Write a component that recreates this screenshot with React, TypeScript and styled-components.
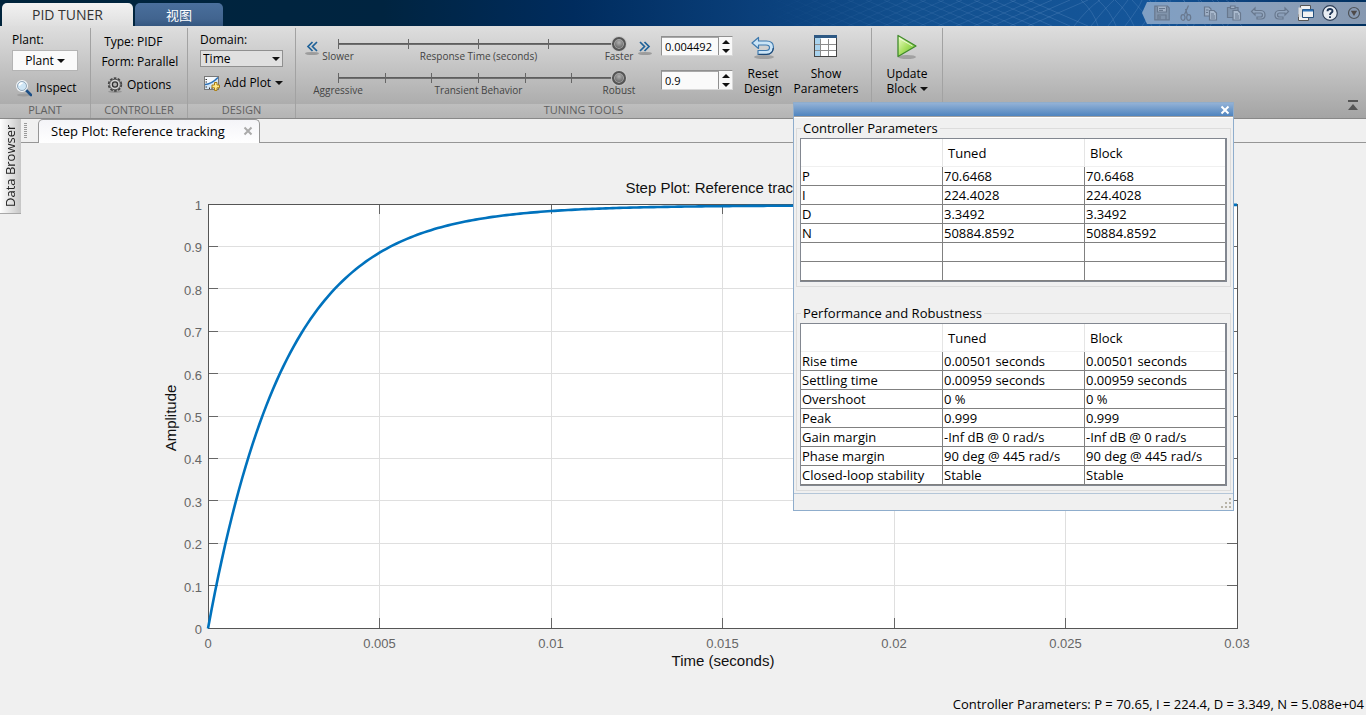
import React from "react";
import styled, { createGlobalStyle } from "styled-components";

const UI_FONT = `"Open Sans", "Noto Sans", "Noto Sans CJK SC", sans-serif`;

const GlobalStyle = createGlobalStyle`
  *, *::before, *::after { box-sizing: border-box; }
  html, body, #root { height: 100%; }
  body { margin: 0; background: #f0f0f0; font: 12px/16px ${UI_FONT}; color: #000; }
  button, input, select { font: inherit; color: inherit; }
`;

const Page = styled.div`
  position: relative;
  display: flex;
  flex-direction: column;
  min-height: 100%;
  overflow-x: hidden;
`;

/* ---------- title bar ---------- */

const TitleBar = styled.header`
  position: relative;
  display: flex;
  align-items: flex-end;
  gap: 2px;
  height: 26px;
  padding-left: 2px;
  background: linear-gradient(90deg, #00243c 0%, #002440 28%, #002c5e 42%, #0a3f7a 55%, #12508f 67%, #15569a 84%, #0a3c74 93%, #00305f 100%);
`;

const Mesh = styled.svg`
  position: absolute;
  top: 0;
  right: 120px;
  width: 540px;
  height: 26px;
`;

const RibbonTab = styled.button<{ $active?: boolean; $width: number }>`
  position: relative;
  width: ${(p) => p.$width}px;
  height: 23px;
  padding: 0;
  border: 0;
  border-radius: 5px 5px 0 0;
  font-size: ${(p) => (p.$active ? 14 : 13)}px;
  color: ${(p) => (p.$active ? "#333" : "#fff")};
  background: ${(p) =>
    p.$active ? "linear-gradient(#f2f2f2, #dfdfdf)" : "linear-gradient(#4a6f9c, #41648f 70%, #34567f)"};
`;

const QuickBar = styled.div`
  position: relative;
  display: flex;
  align-self: center;
  margin-left: auto;
  height: 22px;
  padding-left: 8px;
  background: linear-gradient(90deg, #7f9fc4, #8b9fb9 60%, #8698b0);
  clip-path: polygon(5px 0, 100% 0, 100% 100%, 5px 100%, 0 50%);
`;

const QuickButton = styled.button`
  display: grid;
  place-items: center;
  width: 24px;
  height: 22px;
  padding: 0;
  border: 0;
  background: none;
`;

/* ---------- ribbon ---------- */

const Ribbon = styled.section`
  display: flex;
  height: 93px;
  border-bottom: 1px solid #888;
  background: linear-gradient(#dedede, #a4a4a4);
`;

const Section = styled.div<{ $width: number }>`
  display: flex;
  flex: none;
  flex-direction: column;
  width: ${(p) => p.$width}px;
  border-right: 1px solid;
  border-image: linear-gradient(#dcdcdc 0 3px, #a2a2a2 3px) 1;
`;

const SectionBody = styled.div`
  flex: 1;
  padding: 6px 0 0 12px;
`;

const ToolsBody = styled.div<{ $center?: boolean }>`
  display: flex;
  flex: 1;
  justify-content: ${(p) => (p.$center ? "center" : "flex-start")};
  padding-left: ${(p) => (p.$center ? 0 : 9)}px;
`;

const SectionName = styled.div`
  height: 14px;
  font-size: 11px;
  line-height: 12px;
  text-align: center;
  color: #606060;
  background: linear-gradient(#bebebe, #b4b4b4);
`;

const Line = styled.div`
  font-size: 12px;
  line-height: 16px;
`;

const PlantButton = styled.button`
  display: flex;
  align-items: center;
  justify-content: center;
  gap: 3px;
  width: 66px;
  height: 21px;
  margin-top: 2px;
  padding: 0;
  border: 1px solid #b4b4b4;
  background: #fafafa;
`;

const IconTextButton = styled.button<{ $top: number }>`
  display: flex;
  align-items: center;
  gap: 4px;
  height: 20px;
  margin: ${(p) => p.$top}px 0 0 4px;
  padding: 0;
  border: 0;
  background: none;
  white-space: nowrap;
`;

const TypeList = styled.dl`
  display: grid;
  grid-template-columns: 34px auto;
  column-gap: 3px;
  margin: 0 0 0 -3px;
  line-height: 20px;
  dt { text-align: right; }
  dd { margin: 0; }
`;

const SelectBox = styled.div`
  display: grid;
  align-items: center;
  width: 83px;
  height: 17px;
  margin-top: 2px;
  > * { grid-area: 1 / 1; }
  > svg { justify-self: end; margin-right: 3px; pointer-events: none; }
`;

const DomainSelect = styled.select`
  width: 83px;
  height: 17px;
  padding: 0 2px;
  border: 1px solid #909090;
  border-radius: 0;
  background: #e0e0e0;
  line-height: 14px;
  appearance: none;
`;

const ChevronButton = styled.button`
  width: 14px;
  height: 20px;
  margin-top: 12px;
  padding: 0;
  border: 0;
  background: none;
  svg { display: block; }
`;

const SliderColumn = styled.div`
  display: flex;
  flex-direction: column;
  gap: 7px;
  width: 281px;
  margin: 0 19px;
  padding-top: 10px;
`;

const SliderStack = styled.div`
  display: grid;
  height: 15px;
  > * { grid-area: 1 / 1; }
`;

const Ticks = styled.div`
  display: flex;
  align-items: center;
  justify-content: space-between;
  height: 15px;
  background: linear-gradient(#555, #777) center / 100% 2px no-repeat;
  i { width: 1px; height: 10px; background: #666; }
`;

const Range = styled.input`
  height: 15px;
  margin: 0 -7px;
  background: none;
  appearance: none;
  &::-webkit-slider-thumb {
    appearance: none;
    width: 14px;
    height: 14px;
    border: 2px solid #555;
    border-radius: 50%;
    background: radial-gradient(circle at 50% 35%, #b0b0b0, #666 70%);
    box-shadow: inset 0 0 0 1px #aaa, 0 0 0 1px #c8c8c8;
  }
`;

const SliderLabels = styled.div`
  display: grid;
  grid-template-columns: 60px 1fr 60px;
  margin: 0 -30px;
  font-size: 10px;
  line-height: 11px;
  text-align: center;
  color: #444;
`;

const SliderBlock = styled.div`
  height: 27px;
`;

const SpinColumn = styled.div`
  display: flex;
  flex-direction: column;
  gap: 14px;
  width: 72px;
  margin-left: 9px;
  padding-top: 10px;
`;

const SpinBox = styled.div`
  display: flex;
  height: 20px;
  border: 1px solid #d8d8d8;
  border-top-color: #909090;
  border-left-color: #909090;
  background: #f8f8f8;
`;

const SpinInput = styled.input`
  width: 57px;
  padding: 0 0 0 3px;
  border: 0;
  border-top: 1px solid #a8a8a8;
  border-right: 1px solid #909090;
  background: #fafafa;
  font-size: 11px;
`;

const SpinButtons = styled.div`
  display: flex;
  flex: 1;
  flex-direction: column;
  button {
    display: grid;
    flex: 1;
    place-items: center;
    padding: 0;
    border: 0;
    background: none;
  }
`;

const BigButton = styled.button<{ $width: number }>`
  display: flex;
  flex-direction: column;
  align-items: center;
  gap: 6px;
  width: ${(p) => p.$width}px;
  height: 78px;
  padding: 8px 0 0;
  border: 0;
  background: none;
  line-height: 15px;
  svg { flex: none; }
  span svg { margin-left: 3px; vertical-align: 2px; }
`;

const CollapseButton = styled.button`
  align-self: flex-end;
  margin: 0 8px 7px auto;
  padding: 0;
  border: 0;
  background: none;
  svg { display: block; }
`;

/* ---------- document ---------- */

const Workspace = styled.div`
  display: flex;
  flex: 1;
`;

const Rail = styled.nav`
  width: 21px;
`;

const RailButton = styled.button`
  width: 21px;
  height: 95px;
  padding: 0;
  border: 0;
  border-top: 1px solid #a8a8a8;
  background: linear-gradient(270deg, #fff, #c6c6c6);
  writing-mode: vertical-rl;
  transform: rotate(180deg);
  font-size: 13px;
  line-height: 21px;
  color: #222;
`;

const Document = styled.main`
  display: flex;
  flex: 1;
  flex-direction: column;
  min-width: 0;
`;

const TabStrip = styled.div`
  display: flex;
  height: 24px;
  &::after { content: ""; flex: 1; border-bottom: 1px solid #969696; }
`;

const Grip = styled.div`
  width: 17px;
  padding: 4px 0 0 3px;
  border-bottom: 1px solid #969696;
  &::before {
    content: "";
    display: block;
    width: 3px;
    height: 16px;
    background: repeating-linear-gradient(#999 0 1px, transparent 1px 2px);
  }
`;

const DocTab = styled.div`
  display: flex;
  align-items: center;
  justify-content: space-between;
  width: 222px;
  padding: 0 6px 2px 12px;
  border: 1px solid #969696;
  border-width: 1px 1px 0;
  border-radius: 5px 5px 0 0;
  background: linear-gradient(#f4f4f8, #fff);
  font-size: 13px;
  white-space: nowrap;
  button { display: grid; padding: 0; border: 0; background: none; }
`;

const Plot = styled.svg`
  display: block;
  width: 100%;
  height: auto;
  font-family: "Liberation Sans", Arial, sans-serif;
`;

const StatusBar = styled.footer`
  margin-top: auto;
  padding: 0 2px 3px;
  text-align: right;
  font-size: 13px;
  line-height: 16px;
`;

/* ---------- floating parameters window ---------- */

const FloatWindow = styled.aside`
  position: absolute;
  top: 102px;
  right: 132px;
  width: 441px;
  border: 1px solid #8fadcc;
  background: #f0f0f0;
  font-size: 13px;
`;

const FloatTitle = styled.div`
  display: flex;
  align-items: center;
  justify-content: flex-end;
  height: 14px;
  padding-right: 3px;
  border-bottom: 1px solid #a0a0a0;
  background: linear-gradient(#93b2d6, #4f84bf);
  button { display: grid; padding: 0; border: 0; background: none; }
`;

const FloatBody = styled.div`
  display: flex;
  flex-direction: column;
  gap: 18px;
  padding: 2px;
  border-top: 1px solid #fff;
  border-bottom: 1px solid #b4c6d8;
`;

const Group = styled.fieldset`
  min-width: 0;
  margin: 0;
  padding: 2px 3px 4px;
  border: 1px solid #dcdcdc;
  legend { margin-left: 1px; padding: 0 2px; line-height: 16px; }
`;

const DataTable = styled.table`
  width: 100%;
  border: 1px solid #828790;
  border-right-width: 2px;
  border-spacing: 0;
  table-layout: fixed;
  background: #fff;
  line-height: 17px;
  white-space: nowrap;
  th, td { height: 19px; padding: 0 1px; text-align: left; font-weight: 400; }
  thead th { width: 142px; height: 28px; padding: 2px 5px 0; border-right: 1px solid #e5e5e5; border-bottom: 1px solid #f0f0f0; }
  thead th:last-child { width: auto; }
  tbody th, tbody td { border-right: 1px solid #808080; border-bottom: 1px solid #808080; }
  tr > :last-child { border-right-width: 0; }
`;

const FloatFoot = styled.div`
  display: flex;
  align-items: flex-end;
  justify-content: flex-end;
  height: 16px;
  padding: 0 1px 1px 0;
`;

/* ---------- icons ---------- */

const Caret = ({ up = false }: { up?: boolean }) => (
  <svg width="8" height="4" viewBox="0 0 8 4" aria-hidden="true">
    <path d={up ? "M0 4L4 0L8 4Z" : "M0 0H8L4 4Z"} fill="#111" />
  </svg>
);

const MagnifierIcon = () => (
  <svg width="16" height="17" viewBox="0 0 16 17" aria-hidden="true">
    <ellipse cx="8" cy="15" rx="7" ry="1.5" fill="#888" opacity=".5" />
    <path d="M9.5 9.5L15 15" stroke="#1c4f86" strokeWidth="2.6" strokeLinecap="round" />
    <circle cx="6" cy="6" r="5.2" fill="#d9edf9" stroke="#f2f6f9" strokeWidth="1.6" />
    <circle cx="6" cy="6" r="4.5" fill="#cfe6f5" stroke="#8295a8" strokeWidth=".8" />
    <path d="M3.4 5.6C3.6 3.8 5 3 6.6 3.1" stroke="#fff" strokeWidth="1.6" fill="none" />
  </svg>
);

const GearIcon = () => (
  <svg width="16" height="16" viewBox="0 0 16 16" aria-hidden="true">
    <ellipse cx="8" cy="14.6" rx="7" ry="1.3" fill="#777" opacity=".5" />
    <circle cx="8" cy="7.5" r="6.3" fill="none" stroke="#444" strokeWidth="1.8" strokeDasharray="2.6 1.36" />
    <circle cx="8" cy="7.5" r="5.3" fill="#d6d6d6" stroke="#555" strokeWidth="1" />
    <circle cx="8" cy="7.5" r="2.6" fill="#b4b4b4" stroke="#333" strokeWidth="1.3" />
  </svg>
);

const AddPlotIcon = () => (
  <svg width="16" height="16" viewBox="0 0 16 16" aria-hidden="true">
    <rect x=".5" y="1.5" width="14" height="13" fill="#f6f9fc" stroke="#777" />
    <path d="M1 14V10C6 10 9 8 14 2.500V14Z" fill="#d4e6f6" />
    <path d="M1 9.500C6 9.500 9 7.500 14 2.500" stroke="#2a70b8" strokeWidth="1.6" fill="none" />
    <path d="M1.5 4.500H3M1.5 7H3M1.5 12H3M5.500 14V12.5M8 14V12.5" stroke="#333" />
    <path d="M10.5 7.5H13V10H15.5V12.8H13V15.4H10.5V12.8H8V10H10.5Z" fill="#ffe88a" stroke="#a87a10" />
  </svg>
);

const Chevrons = ({ right = false }: { right?: boolean }) => (
  <svg width="14" height="20" viewBox="0 0 14 20" aria-hidden="true">
    <ellipse cx="7" cy="15.5" rx="7" ry="1.6" fill="#888" opacity=".7" />
    <g transform={right ? "translate(14 0) scale(-1 1)" : undefined} fill="none" stroke="#1f6299" strokeWidth="1.7">
      <path d="M7.5 4L3 8.5L7.5 13M12 4L7.5 8.5L12 13" />
    </g>
  </svg>
);

const ResetIcon = () => (
  <svg width="24" height="26" viewBox="0 0 24 26" aria-hidden="true">
    <ellipse cx="13" cy="23" rx="10" ry="2" fill="#777" opacity=".5" />
    <path
      d="M1 9L7.500 3.500V7H15.5C20 7 22.5 9.500 22.5 13.300S20 20.500 15.5 20.500H7V16.500H15C17.400 16.500 18.500 15.200 18.500 13.600S17.400 11 15 11H7.500V14.500Z"
      fill="#cbe4f6" stroke="#3f79ad" strokeWidth="1.2" strokeLinejoin="round"
    />
    <path d="M7.5 20.300H15.5C19.5 20.300 22 17.500 22.3 14" stroke="#1d4773" strokeWidth="1.2" fill="none" />
  </svg>
);

const TableIcon = () => (
  <svg width="24" height="26" viewBox="0 0 24 26" aria-hidden="true">
    <rect x=".5" y="1.5" width="22" height="21" fill="#fff" stroke="#555" />
    <rect x="1" y="4" width="6" height="18" fill="#a9d3ee" />
    <rect x="0" y="1" width="23" height="3" fill="#2e5984" />
    <path d="M6.500 5V22M14.500 5V22M1 10.500H22M1 16.500H22" stroke="#8c8c8c" />
    <path d="M.5 4V22.500H22.500V4" fill="none" stroke="#444" />
  </svg>
);

const PlayIcon = () => (
  <svg width="22" height="26" viewBox="0 0 22 26" aria-hidden="true">
    <defs>
      <linearGradient id="play" x1="0" y1="0" x2="1" y2="1">
        <stop offset="0" stopColor="#f2ffd0" />
        <stop offset=".5" stopColor="#a8e060" />
        <stop offset="1" stopColor="#5cb52c" />
      </linearGradient>
    </defs>
    <ellipse cx="11" cy="23" rx="9" ry="2" fill="#777" opacity=".5" />
    <path d="M2 1.500L20 12L2 22.500Z" fill="url(#play)" stroke="#3f8a2a" strokeWidth="1.300" strokeLinejoin="round" />
    <path d="M3.500 4.500L16.500 12" stroke="#fff" opacity=".7" />
  </svg>
);

const glyph = { fill: "none", stroke: "#68788e", strokeWidth: 1.2 };
const UNDO = "M5 3L1.500 6.500L5 10V8H10.500C12 8 12.500 9 12.500 10S12 12 10.500 12H7V14H11C13.500 14 15 12.300 15 10S13.500 5.500 11 5.500H5Z";

const quickIcons: { name: string; art: React.ReactNode }[] = [
  {
    name: "Save",
    art: (
      <g {...glyph}>
        <path d="M.8 1.200H13.500L15.200 3V14.800H.8Z" fill="#8194ac" />
        <path d="M3.500 1.500V7H12.500V1.500" fill="#a3b3c8" />
        <path d="M5 3.500H11M5 5.300H9M4 14.500V10H12V14.500M6 11V14" />
      </g>
    ),
  },
  {
    name: "Cut",
    art: (
      <g {...glyph}>
        <path d="M10.500 0.500L6.500 9.500M7.500 4L9.500 10" />
        <ellipse cx="5" cy="12.500" rx="2" ry="2.800" />
        <ellipse cx="10.700" cy="12.500" rx="2" ry="2.800" />
      </g>
    ),
  },
  {
    name: "Copy",
    art: (
      <g {...glyph}>
        <path d="M2.500 2H7L9 4V11H2.500Z" fill="#9fb0c6" />
        <path d="M7.500 5.500H12L14.500 8V15H7.500Z" fill="#a9b9cd" />
        <path d="M4 5H6.500M4 7.500H6M9 9H12M9 11H13M9 13H13" />
      </g>
    ),
  },
  {
    name: "Paste",
    art: (
      <g {...glyph}>
        <path d="M1.500 2.500H12V12.500H1.500Z" fill="#8194ac" />
        <path d="M4.500 1H9V3.500H4.500Z" fill="#9fb0c6" />
        <path d="M7 5.500H12L14.500 8V15H7Z" fill="#a9b9cd" />
        <path d="M9 9H12M9 11H13M9 13H13" />
      </g>
    ),
  },
  { name: "Undo", art: <path d={UNDO} {...glyph} fill="#93a6be" /> },
  { name: "Redo", art: <path d={UNDO} {...glyph} fill="#93a6be" transform="translate(16 0) scale(-1 1)" /> },
  {
    name: "Switch windows",
    art: (
      <g stroke="#555" fill="#f2f2f2">
        <path d="M2.500 .500H12.500V6H2.500Z M.500 9.500H10.500V15.500H.500Z" />
        <path d="M.500 2.500H4V12H.500Z" fill="#ddd" stroke="none" />
        <path d="M4.500 4.500H15.500V12.500H4.500Z" stroke="#26507c" />
        <path d="M5 5.500H15" stroke="#2f72b5" strokeWidth="2" />
      </g>
    ),
  },
  {
    name: "Help",
    art: (
      <g>
        <circle cx="8" cy="8" r="7.300" fill="#e8edf3" stroke="#2c3d55" strokeWidth="1.200" />
        <path d="M5.500 6.300C5.500 3.300 10.600 3.400 10.500 6.100C10.400 7.900 8 7.900 8 10M8 11.200V13" fill="none" stroke="#1e3556" strokeWidth="1.900" />
      </g>
    ),
  },
  {
    name: "Customize toolbar",
    art: (
      <g>
        <circle cx="8" cy="8" r="5.500" fill="none" stroke="#4e5358" strokeWidth="1.200" />
        <path d="M4.800 5.800H11.200L8 11Z" fill="#4e4a48" />
      </g>
    ),
  },
];

/* ---------- pieces ---------- */

interface SliderProps {
  name: string;
  from: string;
  to: string;
  ticks: number;
}

const Slider = ({ name, from, to, ticks }: SliderProps) => {
  const id = name.split(" ")[0].toLowerCase();
  return (
    <SliderBlock>
      <SliderStack>
        <Ticks aria-hidden="true">
          {Array.from({ length: ticks }, (_, i) => (
            <i key={i} />
          ))}
        </Ticks>
        <Range id={id} type="range" min={0} max={100} defaultValue={100} />
      </SliderStack>
      <SliderLabels>
        <span>{from}</span>
        <label htmlFor={id}>{name}</label>
        <span>{to}</span>
      </SliderLabels>
    </SliderBlock>
  );
};

const Spinner = ({ label, value }: { label: string; value: string }) => (
  <SpinBox>
    <SpinInput type="text" inputMode="decimal" aria-label={label} defaultValue={value} />
    <SpinButtons>
      <button aria-label={`Increase ${label}`}><Caret up /></button>
      <button aria-label={`Decrease ${label}`}><Caret /></button>
    </SpinButtons>
  </SpinBox>
);

const ResultTable = ({ title, rows }: { title: string; rows: string[][] }) => (
  <Group>
    <legend>{title}</legend>
    <DataTable>
      <thead>
        <tr>
          <th scope="col" />
          <th scope="col">Tuned</th>
          <th scope="col">Block</th>
        </tr>
      </thead>
      <tbody>
        {rows.map(([name, value], i) => (
          <tr key={i}>
            <th scope="row">{name}</th>
            <td>{value}</td>
            <td>{value}</td>
          </tr>
        ))}
      </tbody>
    </DataTable>
  </Group>
);

const CloseGlyph = ({ color }: { color: string }) => (
  <svg width="10" height="10" viewBox="0 0 10 10" aria-hidden="true">
    <path d="M1.500 1.500L8.500 8.500M8.500 1.500L1.500 8.500" stroke={color} strokeWidth="2" />
  </svg>
);

const controllerRows = [
  ["P", "70.6468"],
  ["I", "224.4028"],
  ["D", "3.3492"],
  ["N", "50884.8592"],
  ["", ""],
  ["", ""],
];

const performanceRows = [
  ["Rise time", "0.00501 seconds"],
  ["Settling time", "0.00959 seconds"],
  ["Overshoot", "0 %"],
  ["Peak", "0.999"],
  ["Gain margin", "-Inf dB @ 0 rad/s"],
  ["Phase margin", "90 deg @ 445 rad/s"],
  ["Closed-loop stability", "Stable"],
];

/* Plot frame in the drawing's own units. */
const X0 = 187;
const X1 = 1216;
const Y0 = 485;
const Y1 = 61;
const xAt = (t: number) => X0 + (t / 0.03) * (X1 - X0);
const yAt = (a: number) => Y0 - a * (Y0 - Y1);
const snap = (v: number) => Math.floor(v + 0.01) + 0.5;

const curve = Array.from({ length: 301 }, (_, i) => {
  const t = i * 0.0001;
  const a = 1 - 0.993 * Math.exp(-t / 0.00226) - 0.007 * Math.exp(-t / 0.015);
  return `${xAt(t).toFixed(2)},${(yAt(a) + 0.5).toFixed(2)}`;
}).join(" ");

const StepPlot = () => {
  const xs = [0, 0.005, 0.01, 0.015, 0.02, 0.025, 0.03];
  const ys = [0, 0.1, 0.2, 0.3, 0.4, 0.5, 0.6, 0.7, 0.8, 0.9, 1];
  return (
    <Plot viewBox="0 0 1345 548" role="img" aria-label="Step response, amplitude against time">
      <rect x={X0 + 0.5} y={Y1 + 0.5} width={X1 - X0} height={Y0 - Y1} fill="#fff" />
      {xs.slice(1, -1).map((v) => (
        <path key={v} d={`M${snap(xAt(v))} ${Y1}V${Y0}`} stroke="#dfdfdf" />
      ))}
      {ys.slice(1, -1).map((v) => (
        <path key={v} d={`M${X0} ${snap(yAt(v))}H${X1}`} stroke="#dfdfdf" />
      ))}
      {xs.map((v) => (
        <path key={v} d={`M${snap(xAt(v))} ${Y0}v-10M${snap(xAt(v))} ${Y1}v10`} stroke="#666" />
      ))}
      {ys.map((v) => (
        <path key={v} d={`M${X0} ${snap(yAt(v))}h10M${X1} ${snap(yAt(v))}h-10`} stroke="#666" />
      ))}
      <rect x={X0 + 0.5} y={Y1 + 0.5} width={X1 - X0} height={Y0 - Y1} fill="none" stroke="#555" />
      <polyline points={curve} fill="none" stroke="#0072bd" strokeWidth="2.600" />
      <g fontSize="13" fill="#666">
        {xs.map((v) => (
          <text key={v} x={xAt(v)} y={505} textAnchor="middle">{v}</text>
        ))}
        {ys.map((v) => (
          <text key={v} x={181} y={yAt(v) + 6} textAnchor="end">{v}</text>
        ))}
      </g>
      <g fontSize="15" fill="#111" textAnchor="middle">
        <text x={702} y={50}>Step Plot: Reference tracking</text>
        <text x={702} y={523}>Time (seconds)</text>
        <text transform="translate(155 275) rotate(-90)">Amplitude</text>
      </g>
    </Plot>
  );
};

const BannerMesh = () => (
  <Mesh viewBox="0 0 540 26" aria-hidden="true">
    <defs>
      <linearGradient id="fade" x1="0" x2="1">
        <stop offset=".1" stopColor="#000" />
        <stop offset=".65" stopColor="#fff" />
      </linearGradient>
      <mask id="meshMask">
        <rect width="540" height="26" fill="url(#fade)" />
      </mask>
    </defs>
    <g mask="url(#meshMask)" stroke="#6f9bcb" strokeOpacity=".28" fill="none">
      {Array.from({ length: 20 }, (_, i) => (
        <path key={i} d={`M${i * 18 - 20} 26L${i * 18 + 40} 0M${i * 18 - 20} 0L${i * 18 + 40} 26`} />
      ))}
      {Array.from({ length: 10 }, (_, i) => (
        <path key={i} d={`M${368 + i * 17} 26Q${382 + i * 17} 8 ${394 + i * 14} 0M${375 + i * 17} 0Q${388 + i * 17} 12 ${392 + i * 18} 26`} />
      ))}
    </g>
  </Mesh>
);

export default function App() {
  return (
    <Page>
      <GlobalStyle />
      <TitleBar>
        <BannerMesh />
        <RibbonTab $active $width={131}>PID TUNER</RibbonTab>
        <RibbonTab $width={88} lang="zh">视图</RibbonTab>
        <QuickBar>
          {quickIcons.map(({ name, art }) => (
            <QuickButton key={name} aria-label={name}>
              <svg width="16" height="16" viewBox="0 0 16 16" aria-hidden="true">{art}</svg>
            </QuickButton>
          ))}
        </QuickBar>
      </TitleBar>

      <Ribbon>
        <Section $width={91}>
          <SectionBody>
            <Line>Plant:</Line>
            <PlantButton>Plant <Caret /></PlantButton>
            <IconTextButton $top={7}><MagnifierIcon />Inspect</IconTextButton>
          </SectionBody>
          <SectionName>PLANT</SectionName>
        </Section>

        <Section $width={97}>
          <SectionBody>
            <TypeList>
              <dt>Type:</dt><dd>PIDF</dd>
              <dt>Form:</dt><dd>Parallel</dd>
            </TypeList>
            <IconTextButton $top={3}><GearIcon />Options</IconTextButton>
          </SectionBody>
          <SectionName>CONTROLLER</SectionName>
        </Section>

        <Section $width={108}>
          <SectionBody>
            <Line as="label" htmlFor="domain">Domain:</Line>
            <SelectBox>
              <DomainSelect id="domain" defaultValue="Time">
                <option>Time</option>
                <option>Frequency</option>
              </DomainSelect>
              <Caret />
            </SelectBox>
            <IconTextButton $top={6}><AddPlotIcon />Add Plot <Caret /></IconTextButton>
          </SectionBody>
          <SectionName>DESIGN</SectionName>
        </Section>

        <Section $width={576}>
          <ToolsBody>
            <ChevronButton aria-label="Slower response"><Chevrons /></ChevronButton>
            <SliderColumn>
              <Slider name="Response Time (seconds)" from="Slower" to="Faster" ticks={5} />
              <Slider name="Transient Behavior" from="Aggressive" to="Robust" ticks={7} />
            </SliderColumn>
            <ChevronButton aria-label="Faster response"><Chevrons right /></ChevronButton>
            <SpinColumn>
              <Spinner label="response time" value="0.004492" />
              <Spinner label="transient behavior" value="0.9" />
            </SpinColumn>
            <BigButton $width={60}><ResetIcon /><span>Reset<br />Design</span></BigButton>
            <BigButton $width={66}><TableIcon /><span>Show<br />Parameters</span></BigButton>
          </ToolsBody>
          <SectionName>TUNING TOOLS</SectionName>
        </Section>

        <Section $width={71}>
          <ToolsBody $center>
            <BigButton $width={60}><PlayIcon /><span>Update<br />Block<Caret /></span></BigButton>
          </ToolsBody>
          <SectionName />
        </Section>

        <CollapseButton aria-label="Minimize toolstrip">
          <svg width="10" height="12" viewBox="0 0 10 12" aria-hidden="true">
            <path d="M0 1H10V3H0ZM5 5L10 11H0Z" fill="#555" />
          </svg>
        </CollapseButton>
      </Ribbon>

      <Workspace>
        <Rail>
          <RailButton>Data Browser</RailButton>
        </Rail>
        <Document>
          <TabStrip>
            <Grip />
            <DocTab>
              Step Plot: Reference tracking
              <button aria-label="Close tab"><CloseGlyph color="#aaa" /></button>
            </DocTab>
          </TabStrip>
          <StepPlot />
          <StatusBar>Controller Parameters: P = 70.65, I = 224.4, D = 3.349, N = 5.088e+04</StatusBar>
        </Document>
      </Workspace>

      <FloatWindow aria-label="Parameters">
        <FloatTitle>
          <button aria-label="Close"><CloseGlyph color="#fff" /></button>
        </FloatTitle>
        <FloatBody>
          <ResultTable title="Controller Parameters" rows={controllerRows} />
          <ResultTable title="Performance and Robustness" rows={performanceRows} />
        </FloatBody>
        <FloatFoot>
          <svg width="11" height="11" viewBox="0 0 11 11" aria-hidden="true">
            <path d="M8 0h2v2h-2zM8 4h2v2h-2zM4 4h2v2h-2zM8 8h2v2h-2zM4 8h2v2h-2zM0 8h2v2h-2z" fill="#b8b4a8" />
          </svg>
        </FloatFoot>
      </FloatWindow>
    </Page>
  );
}
